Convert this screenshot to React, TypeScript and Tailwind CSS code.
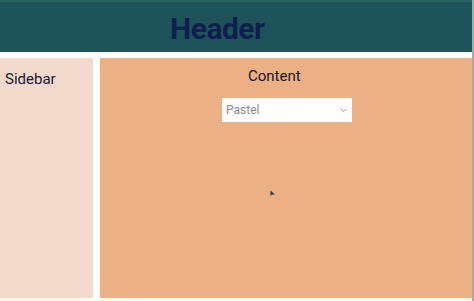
import React from "react";

export default function App() {
  return (
    <div
      className="relative w-[474px] h-[301px] bg-white overflow-hidden border-r-2 border-[#a9a9a9]"
      style={{ fontFamily: "Roboto, 'Liberation Sans', sans-serif" }}
    >
      <div className="h-[52px] bg-[#1e5459] border-t-2 border-[#236462] flex items-center pl-[170px] pt-[4px]">
        <span className="text-[30px] font-bold text-[#0f1f4d] leading-none tracking-[-0.5px]">Header</span>
      </div>
      <div className="mt-[6px] flex gap-[7px] h-[240px]">
        <div className="w-[93px] bg-[#f3d8cc] pt-[9px] pl-[5px]">
          <span className="text-[15px] text-[#1a1838]">Sidebar</span>
        </div>
        <div className="flex-1 bg-[#ebb084] flex flex-col">
          <div className="pt-[8px] pl-[148px] text-[15px] font-normal text-[#1a1030] leading-[20px]">Content</div>
          <div className="mt-[12px] ml-[122px] w-[130px] h-[24px] bg-white flex items-center justify-between px-[4px]">
            <span className="text-[12px] text-[#8a8a8a]">Pastel</span>
            <svg width="7" height="5" viewBox="0 0 7 5" className="mr-[1px]">
              <path d="M1 1 L3.5 3.5 L6 1" stroke="#9a9a9a" strokeWidth="1" fill="none" />
            </svg>
          </div>
        </div>
      </div>
      <svg className="absolute left-[270px] top-[190px]" width="6" height="7" viewBox="0 0 6 7">
        <path d="M0.5 0.5 L0.5 6 L2 4.5 L5 4.5 Z" fill="#1f3a5a" />
      </svg>
    </div>
  );
}
